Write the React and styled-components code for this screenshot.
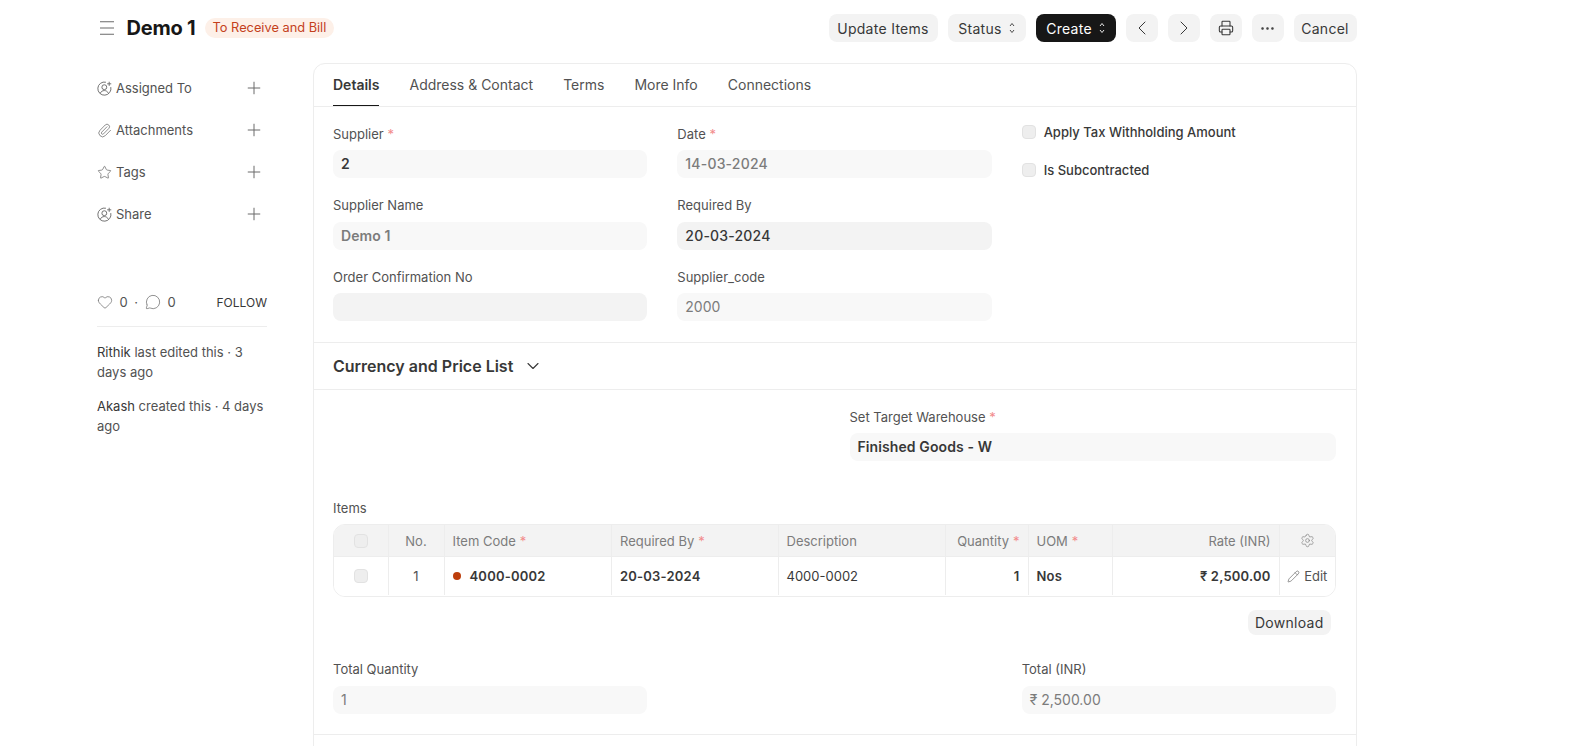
import React from "react";
import styled, { createGlobalStyle } from "styled-components";
import {
  ChevronDown,
  ChevronLeft,
  ChevronRight,
  Ellipsis,
  Heart,
  MessageCircle,
  Paperclip,
  Pencil,
  Plus,
  Printer,
  Settings,
  Star,
} from "lucide-react";

const GlobalStyle = createGlobalStyle`
  html, body {
    margin: 0;
    height: 100%;
    overflow: hidden;
    background: #fff;
    font-family: Inter, "Liberation Sans", sans-serif;
    color: #383838;
  }
`;

const Page = styled.div`
  width: 1259.5px;
  height: 100vh;
  overflow: hidden;
  margin-left: 97px;
`;

const Header = styled.header`
  display: flex;
  align-items: center;
  height: 56px;
`;

const TitleArea = styled.div`
  display: flex;
  align-items: center;
  flex: 1;
`;

const MenuIcon = styled.svg`
  width: 14px;
  height: 14px;
  margin: 0 12.5px 0 3px;
  flex: none;
`;

const Title = styled.h1`
  margin: 0 9px 0 0;
  font-size: 20px;
  font-weight: 700;
  letter-spacing: -0.2px;
  color: #171717;
`;

const Pill = styled.span`
  background: #fdf0e8;
  color: #c4401c;
  font-size: 12.8px;
  height: 20px;
  line-height: 20px;
  padding: 0 8px;
  border-radius: 10px;
`;

const Actions = styled.div`
  display: flex;
  align-items: center;
  gap: 10px;
`;

const Button = styled.button`
  display: flex;
  align-items: center;
  justify-content: center;
  gap: ${(p) => p.$gap || 0}px;
  height: 28px;
  width: ${(p) => p.$w}px;
  padding: 0;
  border: 0;
  border-radius: 8px;
  background: ${(p) => (p.$dark ? "#171717" : "#f3f3f3")};
  color: ${(p) => (p.$dark ? "#fff" : "#383838")};
  font-family: inherit;
  font-size: 14px;
  letter-spacing: 0.28px;
`;

const Body = styled.div`
  display: flex;
  align-items: flex-start;
  margin-top: 7px;
`;

const Sidebar = styled.aside`
  width: 170px;
  margin-right: 45.5px;
  flex: none;
`;

const SideList = styled.div`
  padding-top: 15px;
`;

const SideRow = styled.div`
  display: flex;
  align-items: center;
  height: 20px;
  margin-bottom: 22px;
  font-size: 13px;
  color: #525252;
  svg.lead {
    margin-right: 4px;
    flex: none;
  }
  span {
    flex: 1;
  }
  svg.add {
    margin-right: 3px;
    color: #6b6b6b;
  }
`;

const Stats = styled.div`
  display: flex;
  align-items: center;
  margin-top: 70px;
  padding-bottom: 16px;
  border-bottom: 1px solid #ededed;
  font-size: 13px;
  color: #525252;
  svg {
    color: #6b6b6b;
    flex: none;
  }
`;

const StatText = styled.span`
  margin: 0 7px 0 6.5px;
  word-spacing: 3px;
`;

const Follow = styled.span`
  margin-left: auto;
  font-size: 12px;
  color: #383838;
`;

const Activity = styled.p`
  margin: ${(p) => p.$mt}px 0 0;
  font-size: 13px;
  line-height: 20px;
  color: #525252;
  b {
    font-weight: 400;
    color: #383838;
  }
`;

const Card = styled.main`
  flex: 1;
  border: 1px solid #ededed;
  border-radius: 12px;
  height: 760px;
`;

const Tabs = styled.nav`
  display: flex;
  box-sizing: border-box;
  height: 43px;
  padding: 0 19.5px;
  gap: 30px;
  border-bottom: 1px solid #ededed;
`;

const Tab = styled.div`
  box-sizing: border-box;
  height: 42px;
  line-height: 42px;
  font-size: 14px;
  color: ${(p) => (p.$active ? "#383838" : "#525252")};
  font-weight: ${(p) => (p.$active ? 600 : 400)};
  border-bottom: ${(p) => (p.$active ? "1px solid #171717" : "none")};
`;

const Section = styled.section`
  padding: 0 19.5px;
  border-bottom: 1px solid #ededed;
`;

const FormGrid = styled.div`
  display: grid;
  grid-template-columns: repeat(3, 1fr);
  column-gap: 30px;
`;

const Column = styled.div`
  display: flex;
  flex-direction: column;
  padding-top: ${(p) => p.$pt}px;
`;

const Field = styled.div`
  margin-bottom: ${(p) => (p.$mb === undefined ? 19 : p.$mb)}px;
`;

const Label = styled.div`
  font-size: 13px;
  height: 16px;
  line-height: 16px;
  margin-bottom: 8.5px;
  color: #525252;
  i {
    font-style: normal;
    color: #f28b8b;
  }
`;

const Input = styled.div`
  height: 28px;
  line-height: 28px;
  padding: 0 8px;
  border-radius: 8px;
  font-size: 14px;
  background: ${(p) => (p.$editable ? "#f3f3f3" : "#f8f8f8")};
  color: ${(p) => (p.$muted ? "#7c7c7c" : "#383838")};
  font-weight: ${(p) => (p.$bold ? 600 : p.$medium ? 500 : 400)};
  letter-spacing: ${(p) => (p.$bold ? "0.1px" : p.$medium ? "0.2px" : "0")};
`;

const CheckRow = styled.label`
  display: flex;
  align-items: center;
  height: 20px;
  margin-bottom: 18px;
  font-size: 13px;
  font-weight: 500;
  color: #383838;
`;

const Check = styled.span`
  display: inline-block;
  width: 14px;
  height: 14px;
  box-sizing: border-box;
  border-radius: 4px;
  background: #eeeeee;
  border: 1px solid #e2e2e2;
  margin-right: ${(p) => p.$mr || 0}px;
  flex: none;
`;

const SectionTitle = styled.div`
  display: flex;
  align-items: center;
  height: 46px;
  font-size: 16px;
  font-weight: 600;
  color: #383838;
  gap: 10px;
`;

const WarehouseField = styled.div`
  width: 486.5px;
  margin-left: auto;
  padding-top: 18.5px;
`;

const ItemsLabel = styled(Label)`
  margin: 39px 0 8px;
`;

const Table = styled.div`
  border: 1px solid #ededed;
  border-radius: 12px;
  overflow: hidden;
`;

const TableRow = styled.div`
  display: grid;
  grid-template-columns: 54.5px 56px 167.5px 166.5px 167px 83px 84px 167px 1fr;
  height: ${(p) => p.$h}px;
  background: ${(p) => (p.$head ? "#f3f3f3" : "#fff")};
  border-bottom: ${(p) => (p.$head ? "1px solid #ededed" : "none")};
  font-size: 13px;
  color: ${(p) => (p.$head ? "#7c7c7c" : "#383838")};
`;

const Cell = styled.div`
  display: flex;
  align-items: center;
  justify-content: ${(p) => p.$justify || "flex-start"};
  gap: ${(p) => p.$gap || 0}px;
  padding: 0 ${(p) => (p.$tight ? 0 : 8)}px;
  border-right: ${(p) => (p.$last ? "none" : "1px solid #ededed")};
  margin-bottom: ${(p) => (p.$body ? "1px" : "0")};
  font-weight: ${(p) => (p.$bold ? 600 : 400)};
  letter-spacing: ${(p) => (p.$bold ? "0.2px" : "0")};
  color: ${(p) => (p.$soft ? "#525252" : "inherit")};
  i {
    font-style: normal;
    color: #f28b8b;
    margin-left: 4px;
  }
`;

const Dot = styled.span`
  width: 8px;
  height: 8px;
  border-radius: 50%;
  background: #bd3e0c;
  margin-right: 9px;
  flex: none;
`;

const TableFooter = styled.div`
  display: flex;
  justify-content: flex-end;
  padding: 13px 5px 0 0;
`;

const SmallButton = styled.button`
  height: 25px;
  width: 83.5px;
  padding: 0;
  border: 0;
  border-radius: 8px;
  background: #f3f3f3;
  color: #383838;
  font-family: inherit;
  font-size: 14px;
  letter-spacing: 0.28px;
`;

const Totals = styled.div`
  display: grid;
  grid-template-columns: repeat(3, 1fr);
  column-gap: 30px;
  margin-top: 26px;
  padding-bottom: 20.5px;
`;

const TotalField = styled.div`
  grid-column: ${(p) => p.$col};
`;

const UpDown = () => (
  <svg width="6" height="12" viewBox="0 0 6 12" fill="none" stroke="currentColor" strokeWidth="0.9">
    <path d="M1 4l2-2.5L5 4M1 8l2 2.5L5 8" />
  </svg>
);

const AssignIcon = () => (
  <svg className="lead" width="15" height="15" viewBox="0 0 16 16" fill="none" stroke="#6b6b6b" strokeWidth="1">
    <path d="M9.5 1.3A7 7 0 1 0 14.7 6.5" />
    <circle cx="7.8" cy="6.6" r="2.6" />
    <path d="M3.4 13.2c.8-2 2.5-3 4.4-3s3.6 1 4.4 3" />
    <path d="M13 .8v4.4M10.8 3h4.4" />
  </svg>
);

const sideItems = [
  { label: "Assigned To", icon: <AssignIcon /> },
  { label: "Attachments", icon: <Paperclip className="lead" size={15} strokeWidth={1.2} color="#6b6b6b" /> },
  { label: "Tags", icon: <Star className="lead" size={15} strokeWidth={1.2} color="#6b6b6b" /> },
  { label: "Share", icon: <AssignIcon /> },
];

const tabs = ["Details", "Address & Contact", "Terms", "More Info", "Connections"];

const App = () => {
  return (
    <>
      <GlobalStyle />
      <Page>
        <Header>
          <TitleArea>
            <MenuIcon viewBox="0 0 14 14" stroke="#6b6b6b" strokeWidth="1.1" fill="none">
              <path d="M0 .8h14M0 7h14M0 13.2h14" />
            </MenuIcon>
            <Title>Demo 1</Title>
            <Pill>To Receive and Bill</Pill>
          </TitleArea>
          <Actions>
            <Button $w={109}>Update Items</Button>
            <Button $w={78} $gap={7}>
              Status <UpDown />
            </Button>
            <Button $w={80} $gap={7} $dark>
              Create <UpDown />
            </Button>
            <Button $w={32}>
              <ChevronLeft size={24} strokeWidth={1} />
            </Button>
            <Button $w={32}>
              <ChevronRight size={24} strokeWidth={1} />
            </Button>
            <Button $w={32}>
              <Printer size={16} strokeWidth={1.6} />
            </Button>
            <Button $w={32}>
              <Ellipsis size={17} strokeWidth={1.6} />
            </Button>
            <Button $w={63}>Cancel</Button>
          </Actions>
        </Header>
        <Body>
          <Sidebar>
            <SideList>
              {sideItems.map((item) => (
                <SideRow key={item.label}>
                  {item.icon}
                  <span>{item.label}</span>
                  <Plus className="add" size={20} strokeWidth={1.2} />
                </SideRow>
              ))}
            </SideList>
            <Stats>
              <Heart size={16} strokeWidth={1.1} />
              <StatText>0 ·</StatText>
              <MessageCircle size={16} strokeWidth={1.1} />
              <StatText>0</StatText>
              <Follow>FOLLOW</Follow>
            </Stats>
            <Activity $mt={15}>
              <b>Rithik</b> last edited this · 3<br />days ago
            </Activity>
            <Activity $mt={14}>
              <b>Akash</b> created this · 4 days<br />ago
            </Activity>
          </Sidebar>
          <Card>
            <Tabs>
              {tabs.map((tab, i) => (
                <Tab key={tab} $active={i === 0}>
                  {tab}
                </Tab>
              ))}
            </Tabs>
            <Section>
              <FormGrid>
                <Column $pt={18.5}>
                  <Field>
                    <Label>Supplier <i>*</i></Label>
                    <Input $bold>2</Input>
                  </Field>
                  <Field>
                    <Label>Supplier Name</Label>
                    <Input $bold $muted>Demo 1</Input>
                  </Field>
                  <Field $mb={21}>
                    <Label>Order Confirmation No</Label>
                    <Input $editable />
                  </Field>
                </Column>
                <Column $pt={18.5}>
                  <Field>
                    <Label>Date <i>*</i></Label>
                    <Input $muted $medium>14-03-2024</Input>
                  </Field>
                  <Field>
                    <Label>Required By</Label>
                    <Input $editable $medium>20-03-2024</Input>
                  </Field>
                  <Field $mb={21}>
                    <Label>Supplier_code</Label>
                    <Input $muted>2000</Input>
                  </Field>
                </Column>
                <Column $pt={14.5}>
                  <CheckRow><Check $mr={8} />Apply Tax Withholding Amount</CheckRow>
                  <CheckRow><Check $mr={8} />Is Subcontracted</CheckRow>
                </Column>
              </FormGrid>
            </Section>
            <Section>
              <SectionTitle>
                Currency and Price List <ChevronDown size={20} strokeWidth={1.3} />
              </SectionTitle>
            </Section>
            <Section>
              <WarehouseField>
                <Label>Set Target Warehouse <i>*</i></Label>
                <Input $bold>Finished Goods - W</Input>
              </WarehouseField>
              <ItemsLabel>Items</ItemsLabel>
              <Table>
                <TableRow $head $h={31}>
                  <Cell $justify="center"><Check /></Cell>
                  <Cell $justify="center">No.</Cell>
                  <Cell>Item Code<i>*</i></Cell>
                  <Cell>Required By<i>*</i></Cell>
                  <Cell>Description</Cell>
                  <Cell $justify="flex-end">Quantity<i>*</i></Cell>
                  <Cell>UOM<i>*</i></Cell>
                  <Cell $justify="flex-end">Rate (INR)</Cell>
                  <Cell $justify="center" $last><Settings size={15} strokeWidth={1.2} color="#8a8a8a" /></Cell>
                </TableRow>
                <TableRow $h={39}>
                  <Cell $body $justify="center"><Check /></Cell>
                  <Cell $body $justify="center" $soft>1</Cell>
                  <Cell $body $bold><Dot />4000-0002</Cell>
                  <Cell $body $bold>20-03-2024</Cell>
                  <Cell $body>4000-0002</Cell>
                  <Cell $body $bold $justify="flex-end">1</Cell>
                  <Cell $body $bold>Nos</Cell>
                  <Cell $body $bold $justify="flex-end">₹ 2,500.00</Cell>
                  <Cell $body $justify="center" $last $tight $gap={4} $soft>
                    <Pencil size={13} strokeWidth={1.1} />
                    Edit
                  </Cell>
                </TableRow>
              </Table>
              <TableFooter>
                <SmallButton>Download</SmallButton>
              </TableFooter>
              <Totals>
                <TotalField $col={1}>
                  <Label>Total Quantity</Label>
                  <Input $muted>1</Input>
                </TotalField>
                <TotalField $col={3}>
                  <Label>Total (INR)</Label>
                  <Input $muted>₹ 2,500.00</Input>
                </TotalField>
              </Totals>
            </Section>
          </Card>
        </Body>
      </Page>
    </>
  );
};

export default App;
